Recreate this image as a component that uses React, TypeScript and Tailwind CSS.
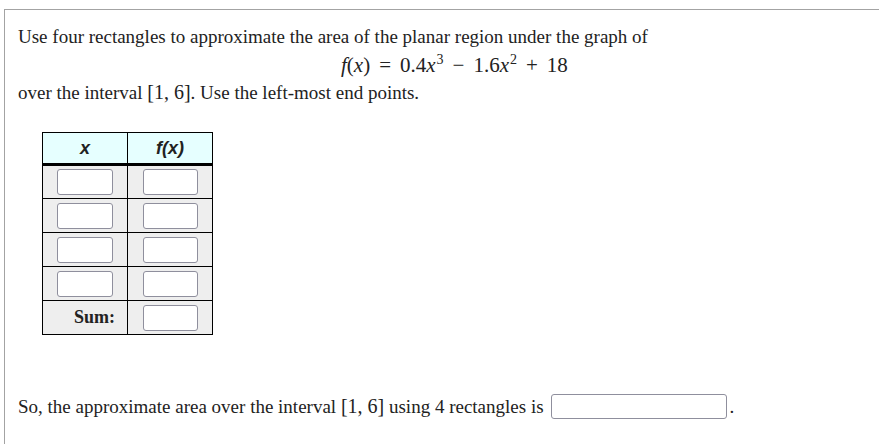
import React from "react";

const serif = { fontFamily: '"Liberation Serif", "Times New Roman", serif' };
const sans = { fontFamily: '"Liberation Sans", Arial, sans-serif' };

function Inp({ w = "w-[56px]" }: { w?: string }) {
  return (
    <div className={`${w} h-[26px] bg-white border border-[#8f8f9d] rounded-[3px] mx-auto`} />
  );
}

function Mi({ children }: { children: React.ReactNode }) {
  return <span className="italic">{children}</span>;
}

export default function App() {
  const rows = [0, 1, 2, 3];
  return (
    <div className="w-[879px] h-[444px] overflow-hidden bg-white pl-[4px] pt-[9px]" style={serif}>
      <div className="h-full border-t border-l border-[#a3a3a3] pl-[13px] pt-[14px] text-[19px] text-[#222]">
        <p className="leading-[26px]">
          Use four rectangles to approximate the area of the planar region under the graph of
        </p>
        <div className="leading-[28px] text-[21px] pl-[323px] pt-[1px]">
          <Mi>f</Mi>(<Mi>x</Mi>)<span className="mx-[9px]">=</span>0.4<Mi>x</Mi>
          <sup className="text-[14px] relative -top-[8px] ml-[1px]">3</sup>
          <span className="mx-[9px]">−</span>1.6<Mi>x</Mi>
          <sup className="text-[14px] relative -top-[8px] ml-[1px]">2</sup>
          <span className="mx-[9px]">+</span>18
        </div>
        <p className="leading-[26px]">
          over the interval <span className="text-[20px]">[1, 6]</span>. Use the left-most end points.
        </p>
        <table className="ml-[24px] mt-[26px] border-collapse border border-black">
          <thead>
            <tr className="bg-[#e6ffff] h-[32px]">
              <th
                className="w-[85px] border border-black text-[18px] font-bold italic text-[#222] border-b-[3px]"
                style={sans}
              >
                x
              </th>
              <th
                className="w-[85px] border border-black text-[18px] font-bold italic text-[#222] border-b-[3px]"
                style={sans}
              >
                f(x)
              </th>
            </tr>
          </thead>
          <tbody>
            {rows.map((r) => (
              <tr key={r} className="bg-[#eeeeee] h-[34px]">
                <td className="border border-black">
                  <Inp />
                </td>
                <td className="border border-black">
                  <Inp w="w-[55px]" />
                </td>
              </tr>
            ))}
            <tr className="bg-[#eeeeee] h-[34px]">
              <td className="border border-black text-right pr-[12px] font-bold text-[18px] text-[#222]">Sum:</td>
              <td className="border border-black">
                <Inp w="w-[55px]" />
              </td>
            </tr>
          </tbody>
        </table>
        <div className="mt-[58px] flex items-center leading-[26px]">
          <span>
            So, the approximate area over the interval <span className="text-[20px]">[1, 6]</span> using 4 rectangles is
          </span>
          <div className="ml-[7px] w-[176px] h-[25px] bg-white border border-[#8f8f9d] rounded-[3px]" />
          <span className="ml-[3px]">.</span>
        </div>
      </div>
    </div>
  );
}
